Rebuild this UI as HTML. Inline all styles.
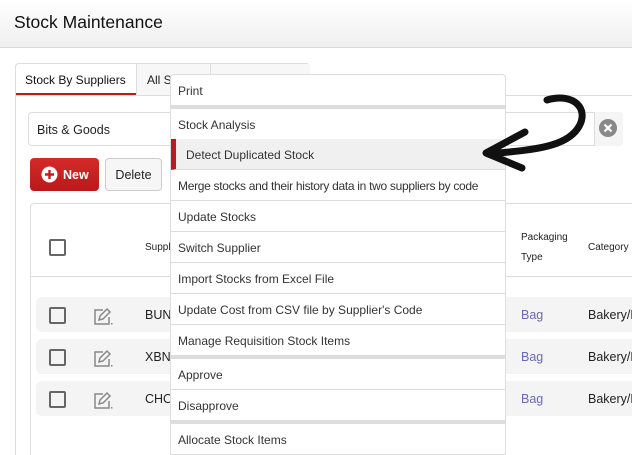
<!DOCTYPE html>
<html style="width:632px;height:455px;overflow:hidden"><head><meta charset="utf-8"><style>
*{box-sizing:border-box;margin:0;padding:0}
body{width:632px;height:455px;overflow:hidden;background:#fff;font-family:"Liberation Sans",sans-serif;color:#222;position:relative}
.a{position:absolute}
.hdr{left:0;top:0;width:632px;height:48px;background:linear-gradient(#fff,#efefef);border-bottom:1px solid #d8d8d8}
.hdr span{position:absolute;left:14px;top:12px;font-size:17.5px;color:#111}
.tabs{left:15px;top:63px;width:295px;height:33px;border:1px solid #ddd;border-bottom:none;border-radius:4px 4px 0 0}
.tab{position:absolute;top:0;height:32px;font-size:12px;padding-top:9px;white-space:nowrap;overflow:hidden}
.panel{left:15px;top:95px;width:617px;height:360px;border-left:1px solid #ddd;border-top:1px solid #ddd}
.inp{left:28px;top:112px;width:595px;height:34px;border:1px solid #ddd;border-radius:4px;font-size:12.5px;padding:10px 8px}
.clr{left:594px;top:112px;width:29px;height:34px;border-left:1px solid #ddd;background:#f5f5f5;border-radius:0 4px 4px 0}
.btnN{left:30px;top:158px;width:69px;height:33px;background:linear-gradient(#d42a2a,#b81a1a);border-radius:4px;color:#fff;font-weight:bold;font-size:12.5px}
.btnD{left:105px;top:158px;width:57px;height:33px;border:1px solid #ccc;border-radius:4px;background:#f6f6f6;font-size:12.5px;text-align:center;padding-top:9px}
.card{left:30px;top:203px;width:602px;height:252px;border:1px solid #ddd;border-right:none;border-bottom:none;border-radius:4px 0 0 0}
.cb{position:absolute;width:17px;height:17px;border:2px solid #666;border-radius:2px}
.row{position:absolute;left:36px;width:596px;height:35px;background:#f4f4f4;border-radius:6px 0 0 6px;overflow:hidden}
.row .t{position:absolute;top:11px;font-size:12.5px;white-space:nowrap}
.menu{left:170px;top:74px;width:336px;height:381px;background:#fff;border:1px solid #ddd;border-bottom:none;border-radius:4px 4px 0 0;overflow:hidden}
.mi{position:absolute;left:0;width:334px;height:31px;border-bottom:1px solid #ddd;font-size:12px;color:#333;padding:9px 7px;white-space:nowrap;overflow:hidden}
.sep{position:absolute;left:0;width:334px;height:4px;background:#ddd}
</style></head><body>
<div class="a hdr"><span>Stock Maintenance</span></div>
<div class="a tabs">
<div class="tab" style="left:0;width:120px;padding-left:9px;border-bottom:3px solid #b81c1c;color:#111">Stock By Suppliers</div>
<div class="tab" style="left:120px;width:74px;border-left:1px solid #ddd;background:#f7f7f7;padding-left:10px">All Stocks</div>
<div class="tab" style="left:194px;width:100px;border-left:1px solid #ddd;background:#f7f7f7"></div>
</div>
<div class="a panel"></div>
<div class="a inp">Bits &amp; Goods</div>
<div class="a clr"><svg width="29" height="34"><circle cx="13" cy="16" r="9" fill="#888"/><path d="M9.5 12.5l7 7M16.5 12.5l-7 7" stroke="#fff" stroke-width="2.2"/></svg></div>
<div class="a btnN"><svg class="a" style="left:11px;top:8px" width="17" height="17"><circle cx="8.5" cy="8.5" r="8" fill="#fff"/><path d="M8.5 4v9M4 8.5h9" stroke="#c11f1f" stroke-width="2.4"/></svg><span class="a" style="left:33px;top:10px">New</span></div>
<div class="a btnD">Delete</div>
<div class="a card"></div>
<div class="a" style="left:30px;top:276px;width:602px;height:1px;background:#ddd"></div>
<div class="cb" style="left:49px;top:239px"></div>
<div class="a" style="left:145px;top:242px;font-size:10px">Suppl</div>
<div class="a" style="left:521px;top:228px;font-size:10px;line-height:20px">Packaging<br>Type</div>
<div class="a" style="left:588px;top:242px;font-size:10px">Category</div>
<div class="row" style="top:297px"><div class="cb" style="left:13px;top:10px"></div><span class="t" style="left:109px">BUN</span><span class="t" style="left:485px;color:#6a6ab0">Bag</span><span class="t" style="left:552px">Bakery/D</span></div>
<div class="row" style="top:339px"><div class="cb" style="left:13px;top:10px"></div><span class="t" style="left:109px">XBN</span><span class="t" style="left:485px;color:#6a6ab0">Bag</span><span class="t" style="left:552px">Bakery/D</span></div>
<div class="row" style="top:381px"><div class="cb" style="left:13px;top:10px"></div><span class="t" style="left:109px">CHO</span><span class="t" style="left:485px;color:#6a6ab0">Bag</span><span class="t" style="left:552px">Bakery/D</span></div>
<svg class="a" style="left:0;top:0" width="632" height="455">
<g fill="none" stroke="#888" stroke-width="1.5">
<path d="M103 310h-8v14h14v-7"/><path d="M99 320l1-4 7-7 3 3-7 7z"/>
<path d="M103 352h-8v14h14v-7"/><path d="M99 362l1-4 7-7 3 3-7 7z"/>
<path d="M103 394h-8v14h14v-7"/><path d="M99 404l1-4 7-7 3 3-7 7z"/>
</g>
<g fill="#888"><rect x="111" y="323" width="1.5" height="1.5"/><rect x="111" y="365" width="1.5" height="1.5"/><rect x="111" y="407" width="1.5" height="1.5"/></g>
</svg>
<div class="a menu">
<div class="mi" style="top:0">Print</div>
<div class="sep" style="top:30px"></div>
<div class="mi" style="top:34px">Stock Analysis</div>
<div class="mi" style="top:64px;background:#f0f0f0;border-left:5px solid #b81c1c;padding-left:10px">Detect Duplicated Stock</div>
<div class="mi" style="top:95px;letter-spacing:-0.3px">Merge stocks and their history data in two suppliers by code</div>
<div class="mi" style="top:126px">Update Stocks</div>
<div class="mi" style="top:157px">Switch Supplier</div>
<div class="mi" style="top:188px">Import Stocks from Excel File</div>
<div class="mi" style="top:219px">Update Cost from CSV file by Supplier's Code</div>
<div class="mi" style="top:250px;border-bottom:none">Manage Requisition Stock Items</div>
<div class="sep" style="top:280px"></div>
<div class="mi" style="top:284px">Approve</div>
<div class="mi" style="top:315px;border-bottom:none">Disapprove</div>
<div class="sep" style="top:345px"></div>
<div class="mi" style="top:349px">Allocate Stock Items</div>
</div>
<svg class="a" style="left:0;top:0" width="632" height="455"><path d="M547 100C575 92 590 110 578 128C565 148 530 150 488 154M525 132L486 153L522 168" fill="none" stroke="#111" stroke-width="7" stroke-linecap="round" stroke-linejoin="round"/></svg>
</body></html>
